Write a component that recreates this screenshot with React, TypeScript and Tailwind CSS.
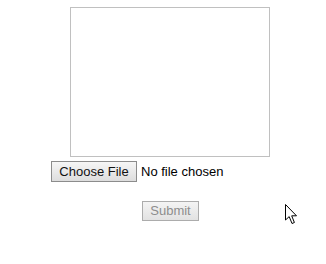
export default function App() {
  return (
    <div className="relative w-[326px] h-[264px] overflow-hidden bg-white font-['Liberation_Sans',Arial,sans-serif] text-[13px] text-black">
      <div className="ml-[70px] pt-[7px]">
        <div className="w-[200px] h-[150px] border border-[#c0c0c0] bg-white" />
      </div>

      <div className="ml-[51px] mt-[4px] flex items-center gap-[4px]">
        <div className="flex h-[21px] w-[86px] items-center justify-center border border-[#8c8c8c] bg-gradient-to-b from-[#f6f6f6] to-[#dddddd] text-[#111]">
          Choose File
        </div>
        <span>No file chosen</span>
      </div>

      <div className="ml-[142px] mt-[19px] flex h-[20px] w-[57px] items-center justify-center border border-[#acacac] bg-gradient-to-b from-[#f4f4f4] to-[#e2e2e2] text-[#8d8d8d]">
        Submit
      </div>

      {/* mouse pointer */}
      <svg
        className="absolute left-[285px] top-[204px]"
        width="13"
        height="21"
        viewBox="0 0 13 21"
      >
        <path
          d="M0.5 0.5 L0.5 16 L4.2 12.6 L7 19.5 L9.4 18.5 L6.7 11.8 L11.5 11.8 Z"
          fill="#fff"
          stroke="#000"
          strokeWidth="1"
          strokeLinejoin="miter"
        />
      </svg>
    </div>
  );
}
